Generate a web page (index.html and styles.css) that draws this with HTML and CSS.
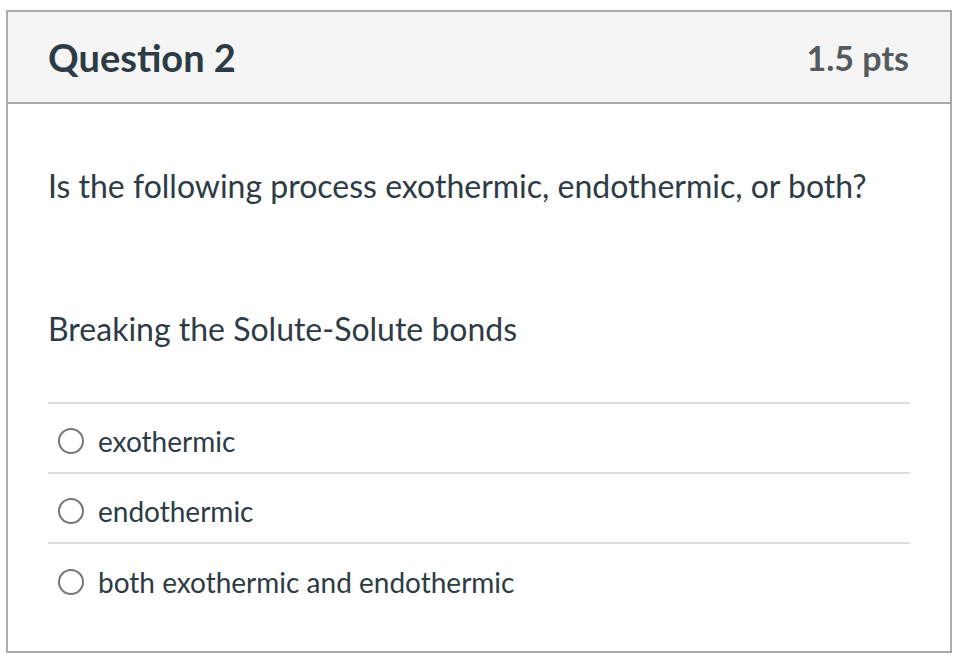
FILE: index.html
```html
<!DOCTYPE html>
<html>
<head>
<meta charset="utf-8">
<link rel="stylesheet" href="styles.css">
</head>
<body>
<div class="question">
  <div class="header">
    <h2 class="title">Question 2</h2>
    <div class="pts">1.5 pts</div>
  </div>
  <div class="content">
    <p class="text first">Is the following process exothermic, endothermic, or both?</p>
    <p class="text second">Breaking the Solute-Solute bonds</p>
    <div class="answers">
      <div class="answer"><span class="radio"></span><span class="label">exothermic</span></div>
      <div class="answer"><span class="radio"></span><span class="label">endothermic</span></div>
      <div class="answer"><span class="radio"></span><span class="label">both exothermic and endothermic</span></div>
    </div>
  </div>
</div>
</body>
</html>
```

FILE: styles.css
```css
html, body {
  margin: 0;
  padding: 0;
  background: #fff;
}
body {
  font-family: Lato, "Open Sans", sans-serif;
  color: #2d3b45;
  padding: 10px 0 0 6px;
}
.question {
  width: 942px;
  height: 639px;
  border: 2px solid #aaaaaa;
  box-sizing: content-box;
}
.header {
  height: 90px;
  background: #f5f5f5;
  border-bottom: 2px solid #aaaaaa;
  display: flex;
  align-items: center;
  justify-content: space-between;
  padding: 0 41px 0 40px;
}
.title {
  margin: 0;
  font-size: 38px;
  font-weight: 700;
  color: #2d3b45;
}
.pts {
  font-size: 34px;
  font-weight: 700;
  color: #555a5e;
}
.content {
  padding: 0 40px 0 40px;
}
.text {
  margin: 0;
  font-size: 32px;
  line-height: 40px;
}
.first {
  padding-top: 62px;
}
.second {
  padding-top: 103px;
  padding-bottom: 53px;
}
.answers {
  border-top: 2px solid #dddddd;
}
.answer {
  box-sizing: border-box;
  height: 70px;
  padding-top: 6px;
  display: flex;
  align-items: center;
  border-bottom: 2px solid #dddddd;
}
.answer:last-child {
  border-bottom: none;
}
.radio {
  width: 22px;
  height: 22px;
  border: 2px solid #777777;
  border-radius: 50%;
  margin-left: 10px;
  margin-right: 14px;
  flex: none;
}
.label {
  font-size: 28px;
}
```
